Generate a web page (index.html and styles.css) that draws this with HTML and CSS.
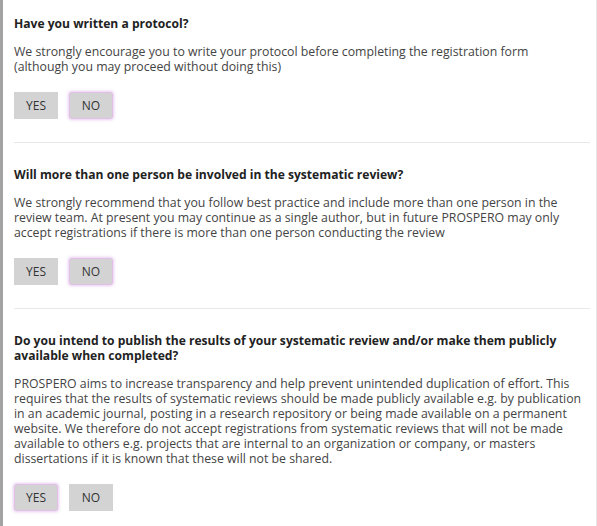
FILE: index.html
```html
<!DOCTYPE html>
<html>
<head>
<meta charset="utf-8">
<link rel="stylesheet" href="styles.css">
</head>
<body>
<div class="panel">
  <section class="q first">
    <h3 class="q-title">Have you written a protocol?</h3>
    <p class="q-text q-text-narrow">We strongly encourage you to write your protocol before completing the registration form (although you may proceed without doing this)</p>
    <div class="btns">
      <button class="btn">YES</button>
      <button class="btn selected">NO</button>
    </div>
  </section>
  <section class="q">
    <h3 class="q-title">Will more than one person be involved in the systematic review?</h3>
    <p class="q-text">We strongly recommend that you follow best practice and include more than one person in the review team. At present you may continue as a single author, but in future PROSPERO may only accept registrations if there is more than one person conducting the review</p>
    <div class="btns">
      <button class="btn">YES</button>
      <button class="btn selected">NO</button>
    </div>
  </section>
  <section class="q last">
    <h3 class="q-title">Do you intend to publish the results of your systematic review and/or make them publicly available when completed?</h3>
    <p class="q-text">PROSPERO aims to increase transparency and help prevent unintended duplication of effort. This requires that the results of systematic reviews should be made publicly available e.g. by publication in an academic journal, posting in a research repository or being made available on a permanent website. We therefore do not accept registrations from systematic reviews that will not be made available to others e.g. projects that are internal to an organization or company, or masters dissertations if it is known that these will not be shared.</p>
    <div class="btns">
      <button class="btn selected">YES</button>
      <button class="btn">NO</button>
    </div>
  </section>
</div>
</body>
</html>
```
FILE: styles.css
```css
html, body {
  margin: 0;
  padding: 0;
  background: #ffffff;
}
body {
  font-family: "Open Sans", "Noto Sans", sans-serif;
  font-size: 12.3px;
  color: #3a3a3a;
}
.panel {
  box-sizing: border-box;
  width: 597px;
  height: 526px;
  border-left: 3px solid #a3a3a3;
  border-right: 1px solid #e6e6e6;
  padding: 0 6px 0 11px;
  overflow: hidden;
}
.q {
  padding: 24px 0 23px;
  border-bottom: 1px solid #e8e8e8;
}
.q.first {
  padding-top: 16px;
}
.q.last {
  border-bottom: none;
}
.q-title {
  margin: 0 0 13px;
  font-size: 12.1px;
  font-weight: 700;
  line-height: 15px;
  color: #222222;
}
.q-text {
  margin: 0 0 18px;
  line-height: 15px;
  color: #444444;
}
.q-text-narrow {
  max-width: 540px;
}
.btns {
  display: flex;
  gap: 11px;
}
.btn {
  box-sizing: border-box;
  width: 44px;
  height: 27px;
  padding: 0;
  border: none;
  background: #d3d3d3;
  font-family: inherit;
  font-size: 12px;
  color: #333333;
}
.btn.selected {
  border: 1px solid #e2bfe6;
  border-radius: 3px;
  box-shadow: 0 0 3px 1px rgba(214, 160, 226, 0.55);
}
```
